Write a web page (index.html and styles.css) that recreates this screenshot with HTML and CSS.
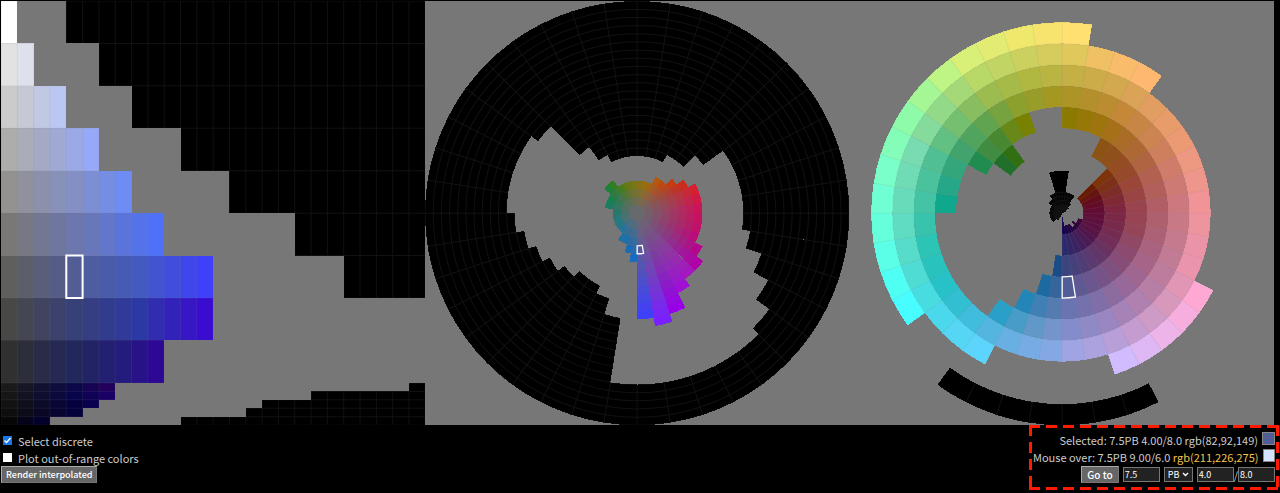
FILE: index.html
```html
<!DOCTYPE html>
<html lang="en">
<head>
    <meta charset="UTF-8">
    <meta name="viewport" content="width=device-width, initial-scale=1.0">
    <title>Munsell Color Picker</title>
    <link rel="stylesheet" href="styles.css">
</head>
<body>
    <main class="charts">
        <svg class="chart" id="chroma-value" viewBox="0 0 424 424" role="img" aria-label="Chroma and value"></svg>
        <svg class="chart" id="hue-chroma" viewBox="-212 -212 424 424" role="img" aria-label="Hue and chroma"></svg>
        <svg class="chart" id="hue-value" viewBox="-212 -212 424 424" role="img" aria-label="Hue and value"></svg>
    </main>

    <footer class="controls">
        <div class="options">
            <label class="option"><input type="checkbox" checked>Select discrete</label>
            <label class="option"><input type="checkbox">Plot out-of-range colors</label>
            <button type="button" class="button">Render interpolated</button>
        </div>

        <div class="readout">
            <div class="line">
                <span>Selected: 7.5PB 4.00/8.0 rgb(82,92,149)</span>
                <span class="swatch swatch-selected"></span>
            </div>
            <div class="line">
                <span>Mouse over: 7.5PB 9.00/6.0 <span class="clipped">rgb(211,226,275)</span></span>
                <span class="swatch swatch-hover"></span>
            </div>
            <form class="goto">
                <button type="button" class="button">Go to</button>
                <input type="text" class="field" value="7.5" aria-label="Hue number">
                <select class="hue" aria-label="Hue">
                    <option>R</option>
                    <option>YR</option>
                    <option>Y</option>
                    <option>GY</option>
                    <option>G</option>
                    <option>BG</option>
                    <option>B</option>
                    <option selected>PB</option>
                    <option>P</option>
                    <option>RP</option>
                </select>
                <div class="pair">
                    <input type="text" class="field" value="4.0" aria-label="Value">/<input type="text" class="field" value="8.0" aria-label="Chroma">
                </div>
            </form>
        </div>
    </footer>

    <script src="charts.js"></script>
</body>
</html>
```
FILE: styles.css
```css
* {
    box-sizing: border-box;
}

body {
    margin: 0;
    background-color: black;
    color: #ccc;
    font-family: "Noto Sans CJK KR", "Noto Sans", sans-serif;
    font-size: 11px;
    line-height: 16px;
}

.charts {
    display: flex;
    padding: 1px 6px 0 1px;
}

.chart {
    display: block;
    flex: 1;
    min-width: 0;
    background-color: #777;
}

.grid {
    fill: none;
    stroke: #808080;
    stroke-opacity: 0.13;
}

.marker {
    fill: none;
    stroke: white;
}

.controls {
    display: flex;
    justify-content: space-between;
    align-items: flex-start;
    padding-right: 1px;
}

.options {
    display: flex;
    flex-direction: column;
    align-items: flex-start;
    padding: 7px 0 0 1px;
}

.option {
    display: flex;
    align-items: center;
    height: 17px;
    gap: 6px;
}

.option input {
    appearance: none;
    width: 9px;
    height: 9px;
    margin: 0 0 0 2px;
    background-color: white;
}

.option input:checked {
    background: #1a73e8 url("data:image/svg+xml,%3Csvg xmlns='http://www.w3.org/2000/svg' viewBox='0 0 9 9'%3E%3Cpath d='M1.5 4.5l2 2 4-4.5' fill='none' stroke='white' stroke-width='1.4'/%3E%3C/svg%3E");
}

.button {
    height: 17px;
    padding: 0 4px;
    border: 1px solid;
    border-color: #aaa #777 #777 #aaa;
    background-color: #666;
    color: white;
    font-family: inherit;
    font-size: 9px;
    font-weight: 500;
    line-height: 14px;
}

.readout {
    width: 250px;
    padding: 7px 4px 7px;
    background-image:
        repeating-linear-gradient(90deg, #ff1a00 0 11px, transparent 11px 17px),
        repeating-linear-gradient(90deg, #ff1a00 0 11px, transparent 11px 17px),
        repeating-linear-gradient(#ff1a00 0 11px, transparent 11px 17px),
        repeating-linear-gradient(#ff1a00 0 11px, transparent 11px 17px);
    background-size: 100% 3px, 100% 3px, 3px 100%, 3px 100%;
    background-position: top, bottom, left, right;
    background-repeat: no-repeat;
}

.line {
    display: flex;
    justify-content: flex-end;
    gap: 4px;
    height: 17px;
    white-space: nowrap;
}

.swatch {
    width: 13px;
    height: 13px;
    border: 1px solid #888;
}

.swatch-selected {
    background-color: rgb(82,92,149);
}

.swatch-hover {
    background-color: rgb(211,226,255);
}

.clipped {
    color: #f3c04b;
}

.goto {
    display: flex;
    justify-content: flex-end;
    align-items: center;
    gap: 4px;
}

.goto .button {
    padding: 0 5px;
    font-size: 10px;
}

.pair {
    display: flex;
    align-items: center;
}

.field,
.hue {
    height: 15px;
    border: 1px solid #777;
    border-radius: 0;
    background-color: #222;
    color: white;
    font-family: inherit;
    font-size: 9px;
}

.field {
    width: 37px;
    padding: 0 1px;
}

.hue {
    width: 29px;
    padding: 0 3px;
    appearance: none;
    line-height: 13px;
    background: #222 url("data:image/svg+xml,%3Csvg xmlns='http://www.w3.org/2000/svg' viewBox='0 0 7 5'%3E%3Cpath d='M1 1l2.5 2.5L6 1' fill='none' stroke='white' stroke-width='1.4'/%3E%3C/svg%3E") no-repeat right 3px center / 7px 5px;
}
```
FILE: charts.js
```js
const R = 212;
const CHROMA_STEPS = 26;
const HUES = 40;

function mix(stops, pos) {
    const keys = Object.keys(stops).map(Number);
    let lo = keys[0];
    let hi = keys[keys.length - 1];
    for (const k of keys) {
        if (k <= pos) lo = k;
    }
    for (const k of keys.slice().reverse()) {
        if (k >= pos) hi = k;
    }
    const t = hi > lo ? Math.max(0, (pos - lo) / (hi - lo)) : 0;
    const channel = (hex, i) => parseInt(hex.substr(i * 2, 2), 16);
    const rgb = [0, 1, 2].map(i =>
        Math.round(channel(stops[lo], i) * (1 - t) + channel(stops[hi], i) * t));
    return 'rgb(' + rgb.join(',') + ')';
}

function shape(d, fill) {
    return `<path d="${d}" fill="${fill}" shape-rendering="crispEdges"/>`;
}

function grid(d) {
    return `<path class="grid" d="${d}"/>`;
}

function box(x, y, w, h) {
    return `M${x} ${y}h${w}v${h}h${-w}z`;
}

// hue 0 starts at the bottom and goes round to the right
function point(r, hue) {
    const a = hue * 2 * Math.PI / HUES;
    return (r * Math.sin(a)).toFixed(2) + ' ' + (r * Math.cos(a)).toFixed(2);
}

function sector(hue, r0, r1) {
    return `M${point(r0, hue)}L${point(r1, hue)}A${r1} ${r1} 0 0 0 ${point(r1, hue + 1)}` +
        `L${point(r0, hue + 1)}A${r0} ${r0} 0 0 1 ${point(r0, hue)}z`;
}

// ---- chroma / value at 7.5PB ----
// n: number of displayable colors, black: first step with no color
const rows = [
    { n: 1, black: 4, stops: { 0: 'ffffff' } },
    { n: 2, black: 6, stops: { 0: 'e2e2e2', 1: 'dde1ee' } },
    { n: 4, black: 8, stops: { 0: 'cbcbcb', 1: 'c6c8d3', 3: 'b9c7f2' } },
    { n: 6, black: 11, stops: { 0: 'adadab', 3: 'a0a9d4', 5: '96a9f8' } },
    { n: 8, black: 14, stops: { 0: '939291', 4: '8490c4', 7: '6d8df4' } },
    { n: 10, black: 18, stops: { 0: '797877', 5: '6877ba', 9: '4e71f8' } },
    { n: 13, black: 21, stops: { 0: '5f5f5e', 4: '525c95', 8: '435ac0', 12: '3e40fa' } },
    { n: 13, black: 26, stops: { 0: '484846', 4: '384078', 8: '2c38a4', 12: '3a0cd0' } },
    { n: 10, black: 26, stops: { 0: '303030', 4: '22275c', 7: '231c7c', 9: '2c0894' } },
    { n: 7, black: 25, stops: { 0: '1a1a1a', 4: '0a0848', 6: '22005c' } },
    { n: 7, black: 19, stops: { 0: '161616', 4: '08064a', 6: '180064' } },
    { n: 6, black: 16, stops: { 0: '121212', 4: '04023e', 5: '0a0050' } },
    { n: 5, black: 15, stops: { 0: '0e0e0e', 4: '04003c' } },
    { n: 3, black: 11, stops: { 0: '060606', 2: '04002c' } }
];

function drawChromaValue() {
    const w = R * 2 / CHROMA_STEPS;
    let out = '';
    let lines = '';
    let y = 0;
    rows.forEach((row, i) => {
        const h = i < 9 ? 42.4 : 8.48;
        for (let c = 0; c < row.n; c++) {
            out += shape(box(c * w, y, w, h), mix(row.stops, c));
            lines += box(c * w, y, w, h);
        }
        out += shape(box(row.black * w, y, (CHROMA_STEPS - row.black) * w, h), 'black');
        for (let c = row.black; c < CHROMA_STEPS; c++) {
            lines += box(c * w, y, w, h);
        }
        y += h;
    });
    out += grid(lines);
    out += `<path class="marker" stroke-width="2" d="${box(4 * w, 254.4, w, 42.4)}"/>`;
    document.getElementById('chroma-value').innerHTML = out;
}

// ---- hue / chroma at value 4 ----
const chromaCount = [
    13, 14, 13, 11, 10, 10, 9, 8, 8, 8,
    8, 8, 8, 7, 6, 5, 5, 4, 4, 4,
    4, 4, 4, 4, 5, 5, 4, 4, 4, 3,
    3, 3, 3, 3, 3, 3, 4, 4, 5, 6
];
const chromaBlack = [
    21, 21, 21, 21, 21, 20, 18, 16, 14, 13,
    13, 13, 13, 13, 10, 8, 8, 7, 7, 7,
    7, 7, 7, 8, 10, 15, 16, 16, 16, 16,
    15, 14, 13, 12, 11, 10, 10, 11, 13, 21
];
const rim = {
    0: '3e40fa', 1: '7a20ff', 2: '9800e8', 3: 'a010d4', 4: 'a418c0', 5: 'b000a8',
    6: 'b4088c', 8: 'c01068', 10: 'cc1458', 12: 'd42030', 13: 'cc2c1c', 14: 'c43c10',
    16: 'b45810', 18: '907010', 20: '7c7418', 22: '607818', 24: '308020', 25: '208038',
    27: '188058', 29: '287868', 31: '2a7878', 33: '287884', 35: '2474a0', 37: '1c70a8',
    38: '1c6cb0', 39: '186cc0'
};

function toHex(rgb) {
    return rgb.match(/\d+/g).map(v => Number(v).toString(16).padStart(2, '0')).join('');
}

function drawHueChroma() {
    const w = R / CHROMA_STEPS;
    let out = '';
    let lines = '';
    for (let k = 0; k < HUES; k++) {
        const n = chromaCount[k];
        const stops = { 0: '68696c' };
        stops[n - 1] = toHex(mix(rim, k));
        for (let c = 0; c < n; c++) {
            out += shape(sector(k, c * w, (c + 1) * w), mix(stops, c));
        }
        out += shape(sector(k, chromaBlack[k] * w, R), 'black');
        for (let c = chromaBlack[k]; c < CHROMA_STEPS; c++) {
            lines += sector(k, c * w, (c + 1) * w);
        }
    }
    out += grid(lines);
    out += `<path class="marker" stroke-width="1.3" d="${sector(0, 4 * w, 5 * w)}"/>`;
    document.getElementById('hue-chroma').innerHTML = out;
}

// ---- hue / value at chroma 8 ----
const valueInner = [
    0.2, 0.6, 0.6, 0.6, 0.8, 0.6, 0.8, 0.8, 1, 1,
    1, 1, 1, 1, 1, 3, 3, 4, 4, 4,
    5, 5, 4, 4, 3, 3, 4, 5, 5, 5,
    6, 6, 6, 6, 6, 6, 5, 4, 3, 2
];
const valueOuter = [
    7, 7, 8, 8, 8, 8, 8, 7, 7, 7,
    7, 7, 7, 7, 7, 7, 8, 8, 8, 9,
    9, 9, 9, 9, 9, 9, 9, 9, 9, 9,
    9, 9, 9, 9, 8, 8, 8, 7, 7, 7
];
// black area round the centre
const coreBlack = {
    12: 0.2, 13: 0.2, 14: 0.4, 15: 0.6, 16: 1, 17: 1, 18: 1, 19: 2, 20: 2, 21: 2,
    22: 1, 23: 1, 24: 0.8, 25: 0.8, 26: 0.6, 27: 0.6, 28: 0.6, 29: 0.6, 30: 0.6,
    31: 0.6, 32: 0.6, 33: 0.6, 34: 0.6, 35: 0.4, 36: 0.4, 37: 0.2
};
const ringColors = [
    { 0: '140050', 5: '30003c', 9: '440034' },
    { 0: '2a2a6c', 3: '441e5c', 6: '581446', 10: '620c34', 12: '640c1c', 14: '681c00' },
    { 0: '3c4480', 3: '5a3a70', 6: '702e58', 10: '7e2640', 12: '7e2c28', 14: '7c3408', 39: '1a4c88' },
    { 0: '525c95', 2: '6c5690', 4: '7e5080', 6: '8c4a70', 8: '944658', 10: '9a4450', 12: '9a4638',
        14: '944c20', 16: '8c5414', 24: '307010', 25: '20702c', 38: '1c6aa0', 39: '38649c' },
    { 0: '6a74b0', 2: '806ea8', 4: '98689a', 6: 'a66488', 10: 'b25e66', 12: 'b26050', 14: 'ae6834',
        16: 'a67018', 18: '967806', 19: '8c7a00', 22: '788200', 23: '688818', 24: '488830',
        25: '408c40', 26: '208c50', 37: '2486b8', 38: '4080b4', 39: '547cb0' },
    { 0: '848ccc', 2: '9a86c0', 4: 'b080b0', 6: 'be7c9c', 10: 'cc787e', 12: 'd07c6a', 14: 'cc8450',
        16: 'c48838', 18: 'b4902a', 20: 'a49822', 22: '8ca02e', 24: '60a450', 26: '42a46c',
        27: '34a67c', 28: '26a888', 29: '10a88c', 36: '2aa0c8', 37: '489cc8', 38: '6098c8', 39: '7494cc' },
    { 0: 'a0a4e4', 1: 'aca2e0', 3: 'c49cd0', 5: 'd898bc', 7: 'ea94ae', 10: 'f09498', 13: 'ec9a74',
        15: 'e29e60', 17: 'd4a84e', 19: 'c4b044', 21: 'b0b840', 23: '9cbc50', 25: '74c070',
        27: '50c094', 29: '44c4a4', 31: '2cc4b4', 33: '26c2c8', 35: '40bcdc', 37: '68b0e4', 39: '84a8e4' },
    { 2: 'd0bcff', 4: 'ecb4e8', 6: 'ffa8d4', 16: 'ffb870', 18: 'f0c064', 19: 'e0c85c', 21: 'ccd05e',
        23: 'b8d868', 25: '92da88', 27: '78dcb0', 29: '68dcba', 31: '56dcc8', 33: '48dce0',
        34: '4cd8ec', 36: '5cd4fc' },
    { 19: 'ffe070', 21: 'eee86c', 23: 'd8f078', 24: 'bff584', 25: 'a5f795', 26: '8efba8',
        28: '7affc8', 30: '66ffdc', 32: '50fff4', 33: '48fdff' }
];

function drawHueValue() {
    const w = R / 10;
    let out = '';
    let lines = '';
    for (let k = 0; k < HUES; k++) {
        for (let v = 0; v < valueOuter[k]; v++) {
            const from = Math.max(v, valueInner[k]);
            if (from >= v + 1) continue;
            out += shape(sector(k, from * w, (v + 1) * w), mix(ringColors[v], k));
            lines += sector(k, from * w, (v + 1) * w);
        }
        if (coreBlack[k]) {
            out += shape(sector(k, 0, coreBlack[k] * w), 'black');
            for (let r = 0.2; r <= Math.min(1, coreBlack[k]) + 0.01; r += 0.2) {
                lines += sector(k, (r - 0.2) * w, r * w);
            }
        }
        if (k < 3 || k > 35) {
            out += shape(sector(k, 9 * w, R), 'black');
            lines += sector(k, 9 * w, R);
        }
    }
    out += grid(lines);
    out += `<path class="marker" stroke-width="1.3" d="${sector(0, 3 * w, 4 * w)}"/>`;
    document.getElementById('hue-value').innerHTML = out;
}

drawChromaValue();
drawHueChroma();
drawHueValue();
```
